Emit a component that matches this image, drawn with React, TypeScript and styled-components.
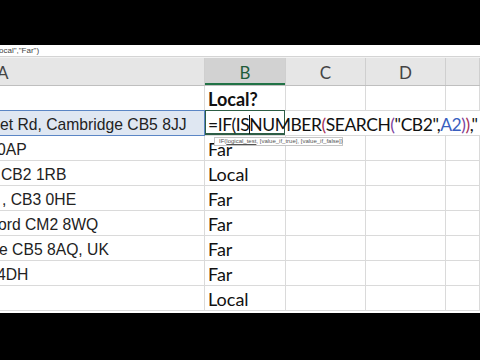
import styled, { createGlobalStyle } from "styled-components";

const GlobalStyle = createGlobalStyle`
  html, body {
    margin: 0;
    padding: 0;
    background: #000;
  }
`;

const cellFont = `"Lato", "Open Sans", sans-serif`;
const arialFont = `"Liberation Sans", Arial, sans-serif`;

const columns = "205px 81px 80px 80px 34px";

const rows = [
  { a: "", aShift: 0, b: "Local?", bold: true },
  { a: "et Rd, Cambridge CB5 8JJ", aShift: 0, b: "", bold: false },
  { a: "0AP", aShift: -3, b: "Far", bold: false },
  { a: "CB2 1RB", aShift: 1, b: "Local", bold: false },
  { a: ", CB3 0HE", aShift: 2, b: "Far", bold: false },
  { a: "ord CM2 8WQ", aShift: -2, b: "Far", bold: false },
  { a: "e CB5 8AQ, UK", aShift: -1, b: "Far", bold: false },
  { a: "4DH", aShift: -3, b: "Far", bold: false },
  { a: "", aShift: 0, b: "Local", bold: false },
];

const App = () => {
  return (
    <>
      <GlobalStyle />
      <Screen>
        <Letterbox $height={45} />
        <FormulaStrip>
          <StripText>ocal","Far")</StripText>
        </FormulaStrip>
        <HeaderRow>
          <HeaderCell $align="left">
            <HeaderLetter $shift={-3}>A</HeaderLetter>
          </HeaderCell>
          <HeaderCell $selected>B</HeaderCell>
          <HeaderCell>C</HeaderCell>
          <HeaderCell>D</HeaderCell>
          <HeaderCell />
        </HeaderRow>
        <Sheet>
          {rows.map((row, i) =>
            i === 1 ? (
              <Row key={i}>
                <RefCell>
                  <AddressText $shift={row.aShift}>{row.a}</AddressText>
                </RefCell>
                <EditCell>
                  <ActiveFrame />
                  <FormulaText>
                    =IF(IS
                    <Caret />
                    NUMBER<Paren $color="#a5305a">(</Paren>SEARCH
                    <Paren $color="#7b3fa0">(</Paren>"CB2",
                    <Ref>A2</Ref>
                    <Paren $color="#7b3fa0">)</Paren>
                    <Paren $color="#a5305a">)</Paren>,"
                  </FormulaText>
                  <Tooltip>
                    IF(<b>logical_test</b>, [value_if_true], [value_if_false])
                  </Tooltip>
                </EditCell>
              </Row>
            ) : (
              <Row key={i}>
                <Cell>
                  <AddressText $shift={row.aShift}>{row.a}</AddressText>
                </Cell>
                <Cell>
                  <ValueText $bold={row.bold}>{row.b}</ValueText>
                </Cell>
                <Cell />
                <Cell />
                <Cell />
              </Row>
            )
          )}
        </Sheet>
        <Letterbox $height={47} />
      </Screen>
    </>
  );
};

const Screen = styled.div`
  width: 480px;
  height: 360px;
  overflow: hidden;
  display: flex;
  flex-direction: column;
  background: #000;
`;

const Letterbox = styled.div<{ $height: number }>`
  height: ${(p) => p.$height}px;
  flex-shrink: 0;
  background: #000;
`;

const FormulaStrip = styled.div`
  height: 11px;
  background: #fff;
  border-bottom: 1px solid #d4d4d4;
  display: flex;
  align-items: center;
  overflow: hidden;
`;

const StripText = styled.span`
  font-family: ${arialFont};
  font-size: 8px;
  color: #444;
  margin-left: -1px;
  white-space: nowrap;
`;

const HeaderRow = styled.div`
  display: grid;
  grid-template-columns: ${columns};
  background: #e6e6e6;
  border-top: 1px solid #f2f2f2;
  border-bottom: 1px solid #bfbfbf;
  box-sizing: border-box;
  height: 29px;
`;

const HeaderCell = styled.div<{ $selected?: boolean; $align?: string }>`
  display: flex;
  align-items: center;
  justify-content: ${(p) => (p.$align === "left" ? "flex-start" : "center")};
  border-right: 1px solid #cfcfcf;
  background: ${(p) => (p.$selected ? "#d2d2d2" : "transparent")};
  box-shadow: ${(p) => (p.$selected ? "inset 0 -2px 0 #217346" : "none")};
  color: ${(p) => (p.$selected ? "#1f5c3a" : "#444")};
  font-family: ${cellFont};
  font-size: 17px;
  padding-top: 1px;
  overflow: hidden;
`;

const HeaderLetter = styled.span<{ $shift: number }>`
  margin-left: ${(p) => p.$shift}px;
`;

const Sheet = styled.div`
  background: #fff;
  display: flex;
  flex-direction: column;
  flex: 1;
`;

const Row = styled.div`
  display: grid;
  grid-template-columns: ${columns};
  height: 25px;
`;

const Cell = styled.div`
  display: flex;
  align-items: flex-end;
  border-right: 1px solid #dadada;
  border-bottom: 1px solid #dadada;
  overflow: hidden;
  white-space: nowrap;
`;

const RefCell = styled(Cell)`
  background: #dfe7f2;
  border-top: 1px solid #5b86c5;
  border-bottom: 1px solid #5b86c5;
  border-right: 1px solid #5b86c5;
  margin-top: -1px;
`;

const AddressText = styled.span<{ $shift: number }>`
  font-family: ${arialFont};
  font-size: 15.7px;
  color: #222;
  margin-left: ${(p) => p.$shift}px;
  padding-bottom: 1px;
`;

const ValueText = styled.span<{ $bold: boolean }>`
  font-family: ${cellFont};
  font-size: 18px;
  font-weight: ${(p) => (p.$bold ? 700 : 400)};
  color: #111;
  padding-left: 3px;
  line-height: 22px;
`;

const EditCell = styled.div`
  grid-column: 2 / -1;
  position: relative;
  background: #fff;
  border-bottom: 1px solid #dadada;
  display: flex;
  align-items: flex-end;
  white-space: nowrap;
`;

const ActiveFrame = styled.div`
  position: absolute;
  left: 0;
  top: -1px;
  width: 80px;
  height: 25px;
  border: 1px solid #2d5d45;
  border-bottom-width: 2px;
  box-sizing: border-box;
  pointer-events: none;
`;

const FormulaText = styled.span`
  font-family: ${cellFont};
  font-size: 17.5px;
  letter-spacing: -0.45px;
  line-height: 21px;
  color: #111;
  padding-left: 3px;
  position: relative;
`;

const Paren = styled.span<{ $color: string }>`
  color: ${(p) => p.$color};
`;

const Ref = styled.span`
  color: #3a5fbf;
`;

const Caret = styled.span`
  display: inline-block;
  width: 1px;
  height: 19px;
  background: #111;
  vertical-align: -3px;
  margin: 0 -0.5px;
`;

const Tooltip = styled.div`
  position: absolute;
  left: 9px;
  top: 26px;
  width: 129px;
  height: 9px;
  box-sizing: border-box;
  background: #fff;
  border: 1px solid #c6c6c6;
  font-family: ${arialFont};
  font-size: 6px;
  line-height: 7px;
  color: #555;
  padding-left: 4px;
  z-index: 2;
  b {
    font-weight: 400;
    text-decoration: underline;
  }
`;

export default App;
